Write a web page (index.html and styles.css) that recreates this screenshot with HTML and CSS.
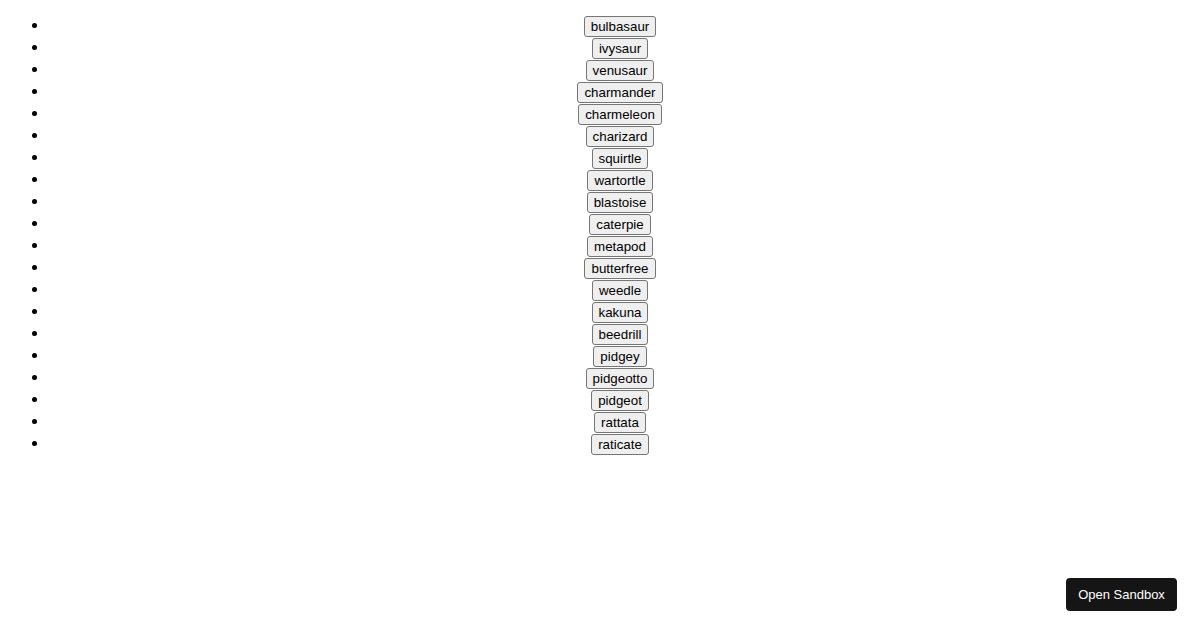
FILE: index.html
```html
<!DOCTYPE html>
<html>
<head>
<meta charset="utf-8">
<link rel="stylesheet" href="styles.css">
</head>
<body>
<ul class="list">
<li class="item"><button class="poke">bulbasaur</button></li>
<li class="item"><button class="poke">ivysaur</button></li>
<li class="item"><button class="poke">venusaur</button></li>
<li class="item"><button class="poke">charmander</button></li>
<li class="item"><button class="poke">charmeleon</button></li>
<li class="item"><button class="poke">charizard</button></li>
<li class="item"><button class="poke">squirtle</button></li>
<li class="item"><button class="poke">wartortle</button></li>
<li class="item"><button class="poke">blastoise</button></li>
<li class="item"><button class="poke">caterpie</button></li>
<li class="item"><button class="poke">metapod</button></li>
<li class="item"><button class="poke">butterfree</button></li>
<li class="item"><button class="poke">weedle</button></li>
<li class="item"><button class="poke">kakuna</button></li>
<li class="item"><button class="poke">beedrill</button></li>
<li class="item"><button class="poke">pidgey</button></li>
<li class="item"><button class="poke">pidgeotto</button></li>
<li class="item"><button class="poke">pidgeot</button></li>
<li class="item"><button class="poke">rattata</button></li>
<li class="item"><button class="poke">raticate</button></li>
</ul>
<a class="sandbox">Open Sandbox</a>
</body>
</html>
```
FILE: styles.css
```css
body {
  margin: 0 8px;
  font-family: "Liberation Serif", serif;
  background: #fff;
}
.list {
  margin: 16px 0;
  padding-left: 40px;
}
.item {
  text-align: center;
  height: 22px;
}
.poke {
  font-family: "Liberation Sans", Arial, sans-serif;
  font-size: 13.333px;
  line-height: 15px;
  padding: 2px 6px;
  border: 1px solid #767676;
  border-radius: 3px;
  background: #efefef;
  color: #000;
  vertical-align: top;
  margin: 0;
}
.sandbox {
  position: fixed;
  right: 23px;
  bottom: 19px;
  width: 111px;
  height: 33px;
  box-sizing: border-box;
  display: flex;
  align-items: center;
  justify-content: center;
  background: #151515;
  color: #fff;
  border-radius: 4px;
  font-family: "Liberation Sans", Arial, sans-serif;
  font-size: 13px;
}
```
